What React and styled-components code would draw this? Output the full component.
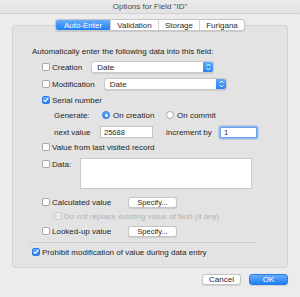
import React from "react";
import styled, { createGlobalStyle, css } from "styled-components";

const GlobalStyle = createGlobalStyle`
  html, body {
    margin: 0;
    padding: 0;
    background: #ececec;
  }
  body {
    font-family: "Liberation Sans", Arial, sans-serif;
    font-size: 8px;
    color: #262626;
  }
`;

const blue = css`
  background: linear-gradient(#67adfa, #1f80f6);
  border-color: #2a7bea;
`;

const Window = styled.div`
  width: 300px;
  height: 297px;
  display: flex;
  flex-direction: column;
  overflow: hidden;
  background: #ececec;
`;

const TitleBar = styled.div`
  height: 13px;
  border-bottom: 1px solid #d2d2d2;
  background: linear-gradient(#ebebeb, #e2e2e2);
  display: flex;
  align-items: center;
  justify-content: center;
  color: #4b4b4b;
  font-size: 8px;
`;

const Body = styled.div`
  flex: 1;
  display: flex;
  flex-direction: column;
  padding: 5px 12px 0;
`;

const TabBar = styled.div`
  position: relative;
  z-index: 1;
  align-self: center;
  display: flex;
  height: 12px;
  box-sizing: border-box;
  border: 1px solid #c6c6c6;
  border-radius: 3px;
  background: #fff;
  overflow: hidden;
  box-shadow: 0 0.5px 1px rgba(0, 0, 0, 0.12);
`;

const Tab = styled.div`
  width: ${(p) => p.$w}px;
  display: flex;
  align-items: center;
  justify-content: center;
  font-size: 8px;
  color: #2b2b2b;
  border-left: 1px solid #d2d2d2;
  &:first-child {
    border-left: none;
  }
  ${(p) =>
    p.$active &&
    css`
      ${blue};
      color: #fff;
    `}
`;

const Panel = styled.div`
  margin-top: -6px;
  height: 243px;
  box-sizing: border-box;
  border: 1px solid #d4d4d4;
  border-radius: 3px;
  background: #e3e3e3;
  padding: 21px 0 0 19px;
  display: flex;
  flex-direction: column;
`;

const Intro = styled.div`
  height: 10px;
  line-height: 10px;
  white-space: nowrap;
`;

const Row = styled.div`
  display: flex;
  align-items: ${(p) => (p.$top ? "flex-start" : "center")};
  height: ${(p) => p.$h || 12}px;
  margin-top: ${(p) => p.$mt || 0}px;
  padding-left: ${(p) => p.$indent || 0}px;
  white-space: nowrap;
`;

const CheckCell = styled.div`
  display: flex;
  align-items: center;
  height: 12px;
`;

const Box = styled.span`
  width: 8px;
  height: 8px;
  box-sizing: border-box;
  border: 1px solid #a9a9a9;
  border-radius: 2px;
  background: #fff;
  display: inline-flex;
  align-items: center;
  justify-content: center;
  flex: none;
  ${(p) => p.$checked && blue}
  ${(p) =>
    p.$disabled &&
    css`
      background: #ececec;
      border-color: #cdcdcd;
    `}
`;

const Label = styled.span`
  margin-left: 2px;
  color: ${(p) => (p.$disabled ? "#b3b3b3" : "#262626")};
  width: ${(p) => (p.$w ? `${p.$w}px` : "auto")};
`;

const Select = styled.div`
  margin-left: 9px;
  width: 123px;
  height: 12px;
  box-sizing: border-box;
  border: 1px solid #c9c9c9;
  border-radius: 3px;
  background: #fff;
  display: flex;
  align-items: center;
  justify-content: space-between;
  padding-left: 5px;
  overflow: hidden;
  box-shadow: 0 0.5px 1px rgba(0, 0, 0, 0.1);
`;

const Stepper = styled.span`
  width: 11px;
  height: 12px;
  margin-right: -1px;
  ${blue};
  display: flex;
  align-items: center;
  justify-content: center;
`;

const SubLabel = styled.span`
  width: ${(p) => p.$w}px;
  margin-left: ${(p) => p.$ml || 0}px;
  flex: none;
`;

const Radio = styled.span`
  width: 8px;
  height: 8px;
  box-sizing: border-box;
  border-radius: 50%;
  border: 1px solid #a9a9a9;
  background: #fff;
  margin-left: ${(p) => p.$ml || 0}px;
  display: inline-flex;
  align-items: center;
  justify-content: center;
  flex: none;
  ${(p) =>
    p.$checked &&
    css`
      ${blue};
      &::after {
        content: "";
        width: 3px;
        height: 3px;
        border-radius: 50%;
        background: #fff;
      }
    `}
`;

const OptionText = styled.span`
  margin-left: 3px;
  width: ${(p) => (p.$w ? `${p.$w}px` : "auto")};
`;

const Input = styled.div`
  width: ${(p) => p.$w}px;
  height: ${(p) => (p.$focus ? 11 : 12)}px;
  box-sizing: border-box;
  border: 1px solid #c3c3c3;
  background: #fff;
  font-size: 7.5px;
  display: flex;
  align-items: center;
  padding-left: 3px;
  flex: none;
  ${(p) =>
    p.$focus &&
    css`
      border-color: #6fa2ee;
      box-shadow: 0 0 0 1.5px rgba(95, 155, 240, 0.6);
      border-radius: 1px;
    `}
`;

const TextArea = styled.div`
  margin-left: 9px;
  width: 172px;
  height: 31px;
  box-sizing: border-box;
  border: 1px solid #c9c9c9;
  background: #fff;
`;

const Specify = styled.div`
  width: 49px;
  height: 11px;
  box-sizing: border-box;
  border: 1px solid #c6c6c6;
  border-radius: 3px;
  background: #fff;
  font-size: 7.5px;
  display: flex;
  align-items: center;
  justify-content: center;
  box-shadow: 0 0.5px 1px rgba(0, 0, 0, 0.1);
`;

const Separator = styled.div`
  margin: 5px 0 0 -2px;
  width: 227px;
  height: 1px;
  background: #cdcdcd;
`;

const Footer = styled.div`
  display: flex;
  justify-content: flex-end;
  gap: 8px;
  padding-top: 6px;
`;

const Button = styled.div`
  width: 39px;
  height: 11px;
  box-sizing: border-box;
  border: 1px solid #c4c4c4;
  border-radius: 3px;
  background: #fff;
  font-size: 8px;
  display: flex;
  align-items: center;
  justify-content: center;
  box-shadow: 0 0.5px 1px rgba(0, 0, 0, 0.12);
  ${(p) =>
    p.$primary &&
    css`
      ${blue};
      color: #fff;
    `}
`;

function Check({ checked, disabled }) {
  return (
    <Box $checked={checked} $disabled={disabled}>
      {checked && (
        <svg width="6" height="6" viewBox="0 0 6 6">
          <path d="M0.9 3.1 L2.3 4.6 L5.1 1.2" stroke="#fff" strokeWidth="1.1" fill="none" strokeLinecap="round" strokeLinejoin="round" />
        </svg>
      )}
    </Box>
  );
}

function CheckField({ checked, disabled, children, w }) {
  return (
    <CheckCell>
      <Check checked={checked} disabled={disabled} />
      <Label $disabled={disabled} $w={w}>{children}</Label>
    </CheckCell>
  );
}

function PopUp({ value }) {
  return (
    <Select>
      <span>{value}</span>
      <Stepper>
        <svg width="7" height="10" viewBox="0 0 7 10">
          <path d="M1.5 4 L3.5 2 L5.5 4 M1.5 6 L3.5 8 L5.5 6" stroke="#fff" strokeWidth="1" fill="none" />
        </svg>
      </Stepper>
    </Select>
  );
}

const tabs = [
  { name: "Auto-Enter", w: 54, active: true },
  { name: "Validation", w: 47 },
  { name: "Storage", w: 40 },
  { name: "Furigana", w: 44 },
];

export default function App() {
  return (
    <>
      <GlobalStyle />
      <Window>
        <TitleBar>Options for Field "ID"</TitleBar>
        <Body>
          <TabBar>
            {tabs.map((t) => (
              <Tab key={t.name} $w={t.w} $active={t.active}>{t.name}</Tab>
            ))}
          </TabBar>
          <Panel>
            <Intro>Automatically enter the following data into this field:</Intro>

            <Row $mt={4} $indent={10}>
              <CheckField>Creation</CheckField>
              <PopUp value="Date" />
            </Row>
            <Row $mt={5} $indent={10}>
              <CheckField>Modification</CheckField>
              <PopUp value="Date" />
            </Row>
            <Row $mt={4} $indent={10}>
              <CheckField checked>Serial number</CheckField>
            </Row>
            <Row $mt={3} $indent={22}>
              <SubLabel $w={46}>Generate:</SubLabel>
              <Radio $checked $ml={2} />
              <OptionText $w={53}>On creation</OptionText>
              <Radio />
              <OptionText>On commit</OptionText>
            </Row>
            <Row $mt={5} $indent={22}>
              <SubLabel $w={46}>next value</SubLabel>
              <Input $w={53}>25688</Input>
              <SubLabel $w={54} $ml={13}>increment by</SubLabel>
              <Input $w={37} $focus>1</Input>
            </Row>
            <Row $mt={3} $indent={10}>
              <CheckField>Value from last visited record</CheckField>
            </Row>
            <Row $mt={5} $indent={10} $h={31} $top>
              <CheckField>Data:</CheckField>
              <TextArea />
            </Row>
            <Row $mt={7} $indent={10}>
              <CheckField w={76}>Calculated value</CheckField>
              <Specify>Specify...</Specify>
            </Row>
            <Row $mt={2} $indent={22}>
              <CheckField disabled>Do not replace existing value of field (if any)</CheckField>
            </Row>
            <Row $mt={3} $indent={10}>
              <CheckField w={76}>Looked-up value</CheckField>
              <Specify>Specify...</Specify>
            </Row>
            <Separator />
            <Row $mt={3}>
              <CheckField checked>Prohibit modification of value during data entry</CheckField>
            </Row>
          </Panel>
          <Footer>
            <Button>Cancel</Button>
            <Button $primary>OK</Button>
          </Footer>
        </Body>
      </Window>
    </>
  );
}
